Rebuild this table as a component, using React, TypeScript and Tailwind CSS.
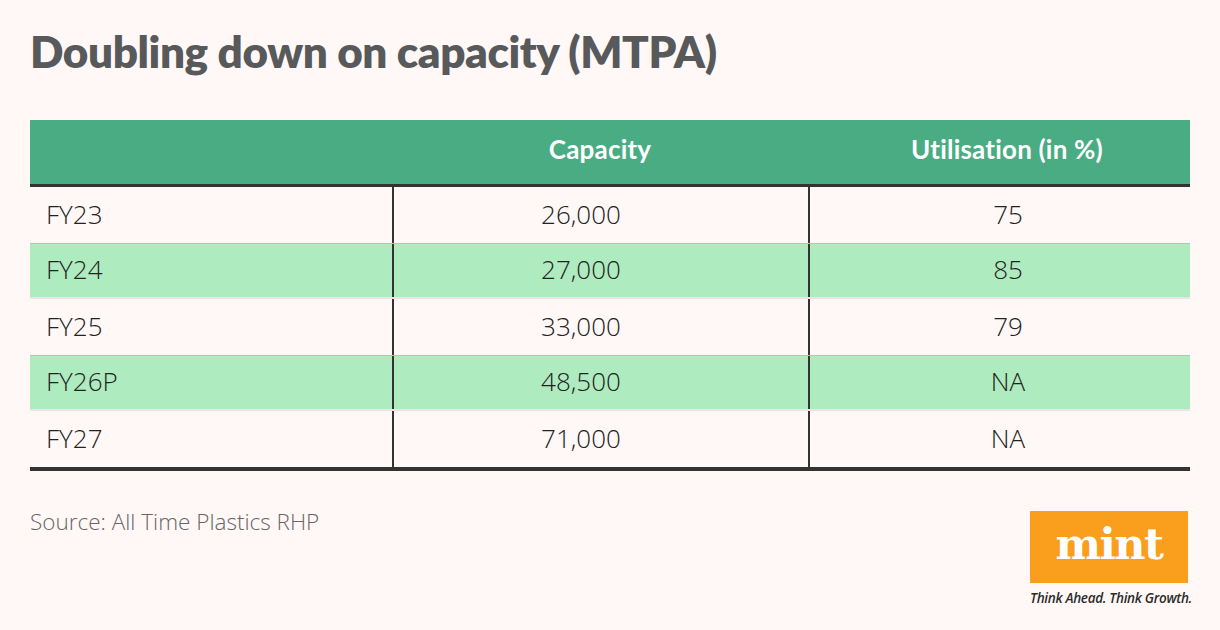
import React from "react";

const rows = [
  { y: "FY23", c: "26,000", u: "75", g: false },
  { y: "FY24", c: "27,000", u: "85", g: true },
  { y: "FY25", c: "33,000", u: "79", g: false },
  { y: "FY26P", c: "48,500", u: "NA", g: true },
  { y: "FY27", c: "71,000", u: "NA", g: false },
];

export default function App() {
  return (
    <div className="w-[1220px] h-[630px] bg-[#fff8f7] overflow-hidden" style={{ fontFamily: "'Open Sans', sans-serif" }}>
      <div className="px-[30px] pt-[25px]">
        <h1 className="text-[44px] leading-[52px] font-extrabold text-[#58595b] tracking-[-0.4px]" style={{ fontFamily: "Lato, sans-serif" }}>
          Doubling down on capacity (MTPA)
        </h1>
        <div className="mt-[43px] w-[1160px]">
          <div className="flex h-[64px] bg-[#4aac83] border-b-[3px] border-[#333] box-content text-white font-bold text-[26px] tracking-[0.2px]" style={{ fontFamily: "Lato, sans-serif" }}>
            <div className="w-[362px]" />
            <div className="w-[416px] flex items-center justify-center pb-[6px]">Capacity</div>
            <div className="flex-1 flex items-center justify-center pl-[16px] pb-[6px]">Utilisation (in %)</div>
          </div>
          <div className="border-b-4 border-[#333]">
            {rows.map((r) => (
              <div
                key={r.y}
                className={`flex h-[56px] text-[26px] font-light text-[#222] ${
                  r.g ? "bg-[#aeebbf] border-t border-[#98d7a8] border-b-2 border-b-[#ebe5e5]" : ""
                }`}
              >
                <div className="w-[362px] flex items-center pl-[16px] pb-[2px]">{r.y}</div>
                <div className="w-[416px] border-l-2 border-[#333] flex items-center justify-center pr-[40px] pb-[2px]">{r.c}</div>
                <div className="flex-1 border-l-2 border-[#333] flex items-center justify-center pl-[16px] pb-[2px]">{r.u}</div>
              </div>
            ))}
          </div>
        </div>
        <div className="flex justify-between mt-[40px] pr-[2px]">
          <div className="text-[22.5px] font-light text-[#666] leading-[28px] -mt-[3px]">Source: All Time Plastics RHP</div>
          <div className="flex flex-col items-end">
            <div className="w-[158px] h-[72px] bg-[#f99f1d] flex items-center justify-center">
              <span className="text-white font-bold text-[43px] leading-none -mt-[6px] tracking-[-1.5px]" style={{ fontFamily: "'DejaVu Serif', serif" }}>
                mint
              </span>
            </div>
            <div className="mt-[7px] -mr-[2px] text-[13.5px] italic font-semibold text-[#2b2b2b] leading-[16px] tracking-[-0.3px] w-[160px] text-right whitespace-nowrap" style={{ fontFamily: "'Open Sans', sans-serif" }}>
              Think Ahead. Think Growth.
            </div>
          </div>
        </div>
      </div>
    </div>
  );
}
